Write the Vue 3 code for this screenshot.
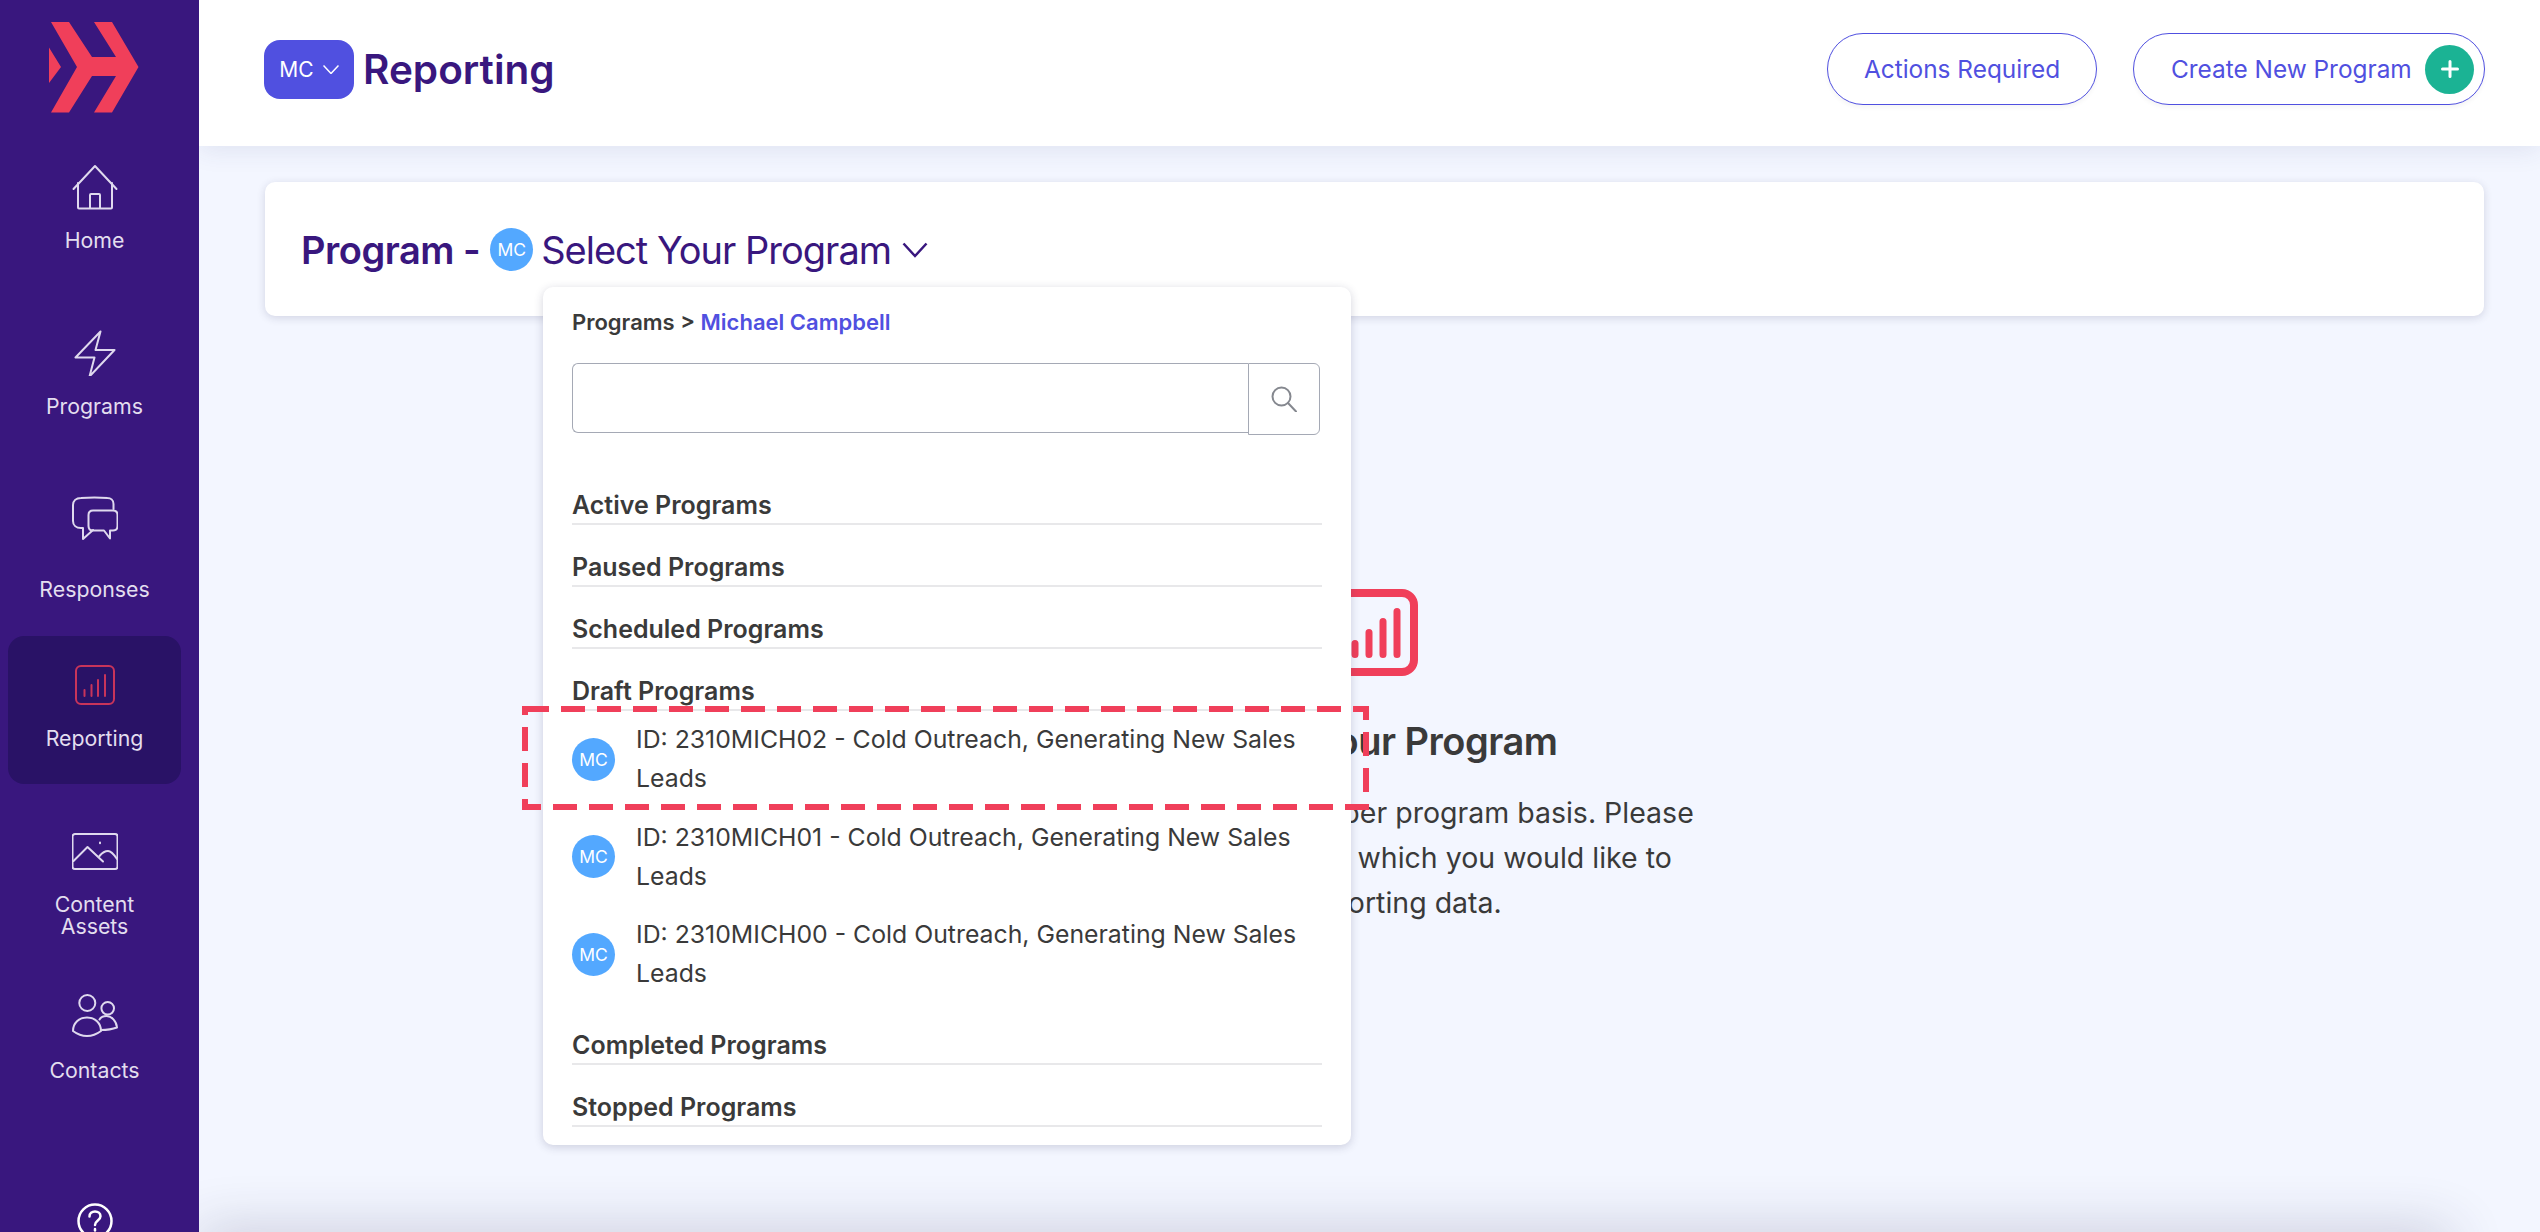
<template>
  <div class="app">
    <aside class="sidebar">
      <svg class="logo" viewBox="0 0 92 92" width="92" height="92">
        <path fill="#f03f5a" d="M1 25.500 13 45 1 61zM3 0h18l23 35h24L46 0h18l26.500 45L64 90.500H46L68 54H44L21 90.500H3L29 45z" />
      </svg>
      <nav class="nav">
        <a v-for="item in navItems" :key="item.label" class="nav-item" :class="{ active: item.active, tall: item.tall }">
          <svg class="nav-icon" viewBox="0 0 46 46" width="46" height="46">
            <path v-for="d in item.paths" :key="d" :d="d" />
          </svg>
          <span class="nav-label">{{ item.label }}</span>
        </a>
      </nav>
      <svg class="help" viewBox="0 0 36 36" width="36" height="36">
        <circle cx="18" cy="18" r="16.500" />
        <path d="M12.500 13.500c0-3.200 2.500-5 5.500-5s5.500 1.900 5.500 4.700c0 4.200-5.500 4.400-5.500 8.800" />
        <path d="M18 26v1.500" />
      </svg>
    </aside>

    <main class="main">
      <header class="topbar">
        <div class="title-wrap">
          <button class="badge">
            MC
            <svg viewBox="0 0 16 9" width="16" height="9"><path d="M.5.500 8 8.500 15.500.500" /></svg>
          </button>
          <h1 class="page-title">Reporting</h1>
        </div>
        <div class="actions">
          <button class="pill">Actions Required</button>
          <button class="pill pill-create">
            Create New Program
            <span class="plus">
              <svg viewBox="0 0 18 18" width="18" height="18"><path d="M9 1.500v15M1.500 9h15" /></svg>
            </span>
          </button>
        </div>
      </header>

      <section class="content">
        <div class="program-card">
          <strong class="program-label">Program -</strong>
          <span class="avatar">MC</span>
          <span class="program-select">Select Your Program</span>
          <svg class="select-chevron" viewBox="0 0 26 16" width="26" height="16"><path d="M1.500 1.500 13 14 24.500 1.500" /></svg>
        </div>

        <div class="empty">
          <svg class="empty-icon" viewBox="0 0 87 87" width="87" height="87">
            <rect x="4" y="4" width="79" height="79" rx="12" />
            <path class="empty-bars" d="M24 65.500V54.500M38 65.500V43.500M52 65.500V32.500M66 65.500V22.500" />
          </svg>
          <h2>Select Your Program</h2>
          <p>Reporting is run on a per program basis. Please<br />select a program for which you would like to<br />see reporting data.</p>
        </div>
      </section>

      <div class="picker">
        <div class="crumbs">Programs &gt; <span>Michael Campbell</span></div>
        <div class="search">
          <input class="search-input" type="text" />
          <button class="search-btn">
            <svg viewBox="0 0 26 26" width="26" height="26">
              <circle cx="10.500" cy="10.500" r="9" />
              <path d="m17 17 8 8.500" />
            </svg>
          </button>
        </div>
        <template v-for="group in groups" :key="group.title">
          <div class="group-title">{{ group.title }}</div>
          <div v-for="p in group.programs" :key="p" class="program-row">
            <span class="avatar">MC</span>
            <span class="program-name">{{ p }}</span>
          </div>
        </template>
      </div>

      <div class="footer-edge"></div>
    </main>

    <svg class="callout" viewBox="0 0 847 104" width="847" height="104">
      <rect x="3" y="3" width="841" height="98" />
    </svg>
  </div>
</template>

<script setup>
const navItems = [
  {
    label: 'Home',
    paths: [
      'M1.500 25 23 2l21.500 23',
      'M6 19v24.500a1 1 0 0 0 1 1h32a1 1 0 0 0 1-1V19',
      'M18 44V31a1 1 0 0 1 1-1h8a1 1 0 0 1 1 1v13'
    ]
  },
  { label: 'Programs', paths: ['M28.500 1.500 3.500 27.500h19L17.500 46.500l25-26.500h-19z'] },
  {
    label: 'Responses',
    tall: true,
    paths: [
      'M41.500 13V8c0-4-3-6-6-6C27 1.500 18 1.500 9 2 4 2 1 5 1 9v16c0 4 3 7 8 7h2v11l10-9',
      'M21 14.500h20c3 0 4.500 2 4.500 4.500v11c0 3-2 4.500-4.500 4.500h-3v8l-6-8H21c-3 0-4.500-2-4.500-4.500V19c0-2.500 1.500-4.500 4.500-4.500z'
    ]
  },
  {
    label: 'Reporting',
    active: true,
    paths: [
      'M9 4h28a5 5 0 0 1 5 5v28a5 5 0 0 1-5 5H9a5 5 0 0 1-5-5V9a5 5 0 0 1 5-5z',
      'M12.500 34v-6M19.500 34V23M26 34V18M33 34V13'
    ]
  },
  {
    label: 'Content Assets',
    paths: [
      'M3 6h40a2.500 2.500 0 0 1 2.500 2.500v30A2.500 2.500 0 0 1 43 41H3a2.500 2.500 0 0 1-2.500-2.500v-30A2.500 2.500 0 0 1 3 6z',
      'M1.500 33 15.500 19l15.500 14.500',
      'M27.500 28c2.500-3 5.500-5 8.500-5 3 0 5 2 9 8',
      'M28 14.500v.8'
    ]
  },
  {
    label: 'Contacts',
    paths: [
      'M15.300 1a8 8 0 1 1 0 16 8 8 0 0 1 0-16z',
      'M35.700 8a6.300 6.300 0 1 1 0 12.600 6.300 6.300 0 0 1 0-12.600z',
      'M1 37c0-8 6-13.500 14-13.500S29 29 29 37c-4 3-9 5-14 5S5 40 1 37z',
      'M27.500 25.500c1-2 4-3.500 7-3.500 5 0 10 5 10.500 11.500-4 1.500-10 2.500-16 2.500'
    ]
  }
]

const rowText = code => `ID: ${code} - Cold Outreach, Generating New Sales Leads`

const groups = [
  { title: 'Active Programs', programs: [] },
  { title: 'Paused Programs', programs: [] },
  { title: 'Scheduled Programs', programs: [] },
  { title: 'Draft Programs', programs: [rowText('2310MICH02'), rowText('2310MICH01'), rowText('2310MICH00')] },
  { title: 'Completed Programs', programs: [] },
  { title: 'Stopped Programs', programs: [] }
]
</script>

<style>
html,
body {
  margin: 0;
  height: 100%;
  overflow: hidden;
}
</style>

<style scoped>
.app {
  display: flex;
  position: relative;
  width: 2540px;
  height: 1232px;
  overflow: hidden;
  font-family: Inter, 'Liberation Sans', sans-serif;
  color: #3a3a3a;
}
.sidebar {
  display: flex;
  flex-direction: column;
  flex: none;
  width: 199px;
  height: 1232px;
  background: #39177e;
}
.logo {
  display: block;
  flex: none;
  margin: 22px 0 0 48px;
}
.nav {
  display: flex;
  flex-direction: column;
  gap: 18px;
  margin-top: 24px;
}
.nav-item {
  display: flex;
  flex-direction: column;
  align-items: center;
  box-sizing: border-box;
  width: 173px;
  height: 148px;
  margin-left: 8px;
  padding-top: 26px;
  border-radius: 16px;
}
.nav-item.active {
  background: #291266;
}
.nav-icon {
  flex: none;
  fill: none;
  stroke: #dfd9ee;
  stroke-width: 2;
  stroke-linejoin: round;
  stroke-linecap: round;
}
.active .nav-icon {
  stroke: #c9345a;
}
.nav-label {
  width: 116px;
  margin-top: 18.500px;
  font-size: 21.300px;
  line-height: 22px;
  text-align: center;
  color: #e3deef;
}
.tall .nav-label {
  margin-top: 36px;
}
.help {
  flex: none;
  margin: 87px 0 0 77px;
  fill: none;
  stroke: #fff;
  stroke-width: 2.500;
  stroke-linecap: round;
}
.main {
  flex: 1;
  position: relative;
  background: #f3f6ff;
  overflow: hidden;
}
.topbar {
  display: flex;
  align-items: center;
  justify-content: space-between;
  box-sizing: border-box;
  position: relative;
  z-index: 1;
  height: 146px;
  padding: 0 55px 8px 65px;
  background: #fff;
  box-shadow: 0 4px 24px rgba(50, 60, 120, 0.1);
}
.title-wrap {
  display: flex;
  align-items: center;
  gap: 9px;
}
.badge {
  display: flex;
  align-items: center;
  justify-content: center;
  gap: 9px;
  width: 90px;
  height: 59px;
  padding: 0;
  border: 0;
  border-radius: 16px;
  background: #5050e0;
  color: #fff;
  font: 400 21px Inter, sans-serif;
}
.badge svg {
  fill: none;
  stroke: #fff;
  stroke-width: 1.500;
}
.page-title {
  margin: 0;
  font-size: 40.500px;
  font-weight: 600;
  color: #39177e;
}
.actions {
  display: flex;
  gap: 36px;
}
.pill {
  display: flex;
  align-items: center;
  justify-content: center;
  box-sizing: border-box;
  width: 270px;
  height: 72px;
  padding: 0;
  border: 1.500px solid #5050e0;
  border-radius: 36px;
  background: #fff;
  box-shadow: 0 3px 4px rgba(0, 0, 0, 0.04);
  color: #5050e0;
  font: 400 24.400px Inter, sans-serif;
}
.pill-create {
  justify-content: flex-start;
  width: 352px;
  padding: 0 10px 0 37px;
}
.plus {
  display: flex;
  align-items: center;
  justify-content: center;
  width: 49px;
  height: 49px;
  margin-left: auto;
  border-radius: 50%;
  background: #1bb394;
}
.plus svg {
  fill: none;
  stroke: #fff;
  stroke-width: 3;
  stroke-linecap: round;
}
.content {
  display: flex;
  flex-direction: column;
  padding: 36px 56px 0 66px;
}
.program-card {
  display: flex;
  align-items: center;
  box-sizing: border-box;
  height: 134px;
  padding: 2px 0 0 36px;
  border-radius: 10px;
  background: #fff;
  box-shadow: 0 2px 8px rgba(40, 40, 80, 0.16);
}
.program-label {
  font-size: 38px;
  font-weight: 600;
  letter-spacing: -0.500px;
  color: #39177e;
}
.program-card .avatar {
  margin: -2px 8px 0 10px;
}
.program-select {
  font-size: 38px;
  letter-spacing: -1px;
  color: #39177e;
}
.select-chevron {
  margin-left: 11px;
  fill: none;
  stroke: #39177e;
  stroke-width: 2.500;
}
.avatar {
  display: flex;
  align-items: center;
  justify-content: center;
  flex: none;
  width: 43px;
  height: 43px;
  border-radius: 50%;
  background: #53a8ff;
  color: #fff;
  font-size: 17.500px;
}
.empty {
  display: flex;
  flex-direction: column;
  align-items: center;
  margin-top: 273px;
}
.empty-icon {
  fill: none;
  stroke: #f03f5a;
  stroke-width: 8;
  stroke-linecap: round;
}
.empty-bars {
  stroke-width: 7;
}
.empty h2 {
  margin: 40px 0 0;
  font-size: 38px;
  line-height: 50px;
  font-weight: 600;
  letter-spacing: -0.500px;
}
.empty p {
  margin: 24px 0 0;
  font-size: 28.500px;
  line-height: 45px;
  text-align: center;
}
.picker {
  position: absolute;
  z-index: 2;
  left: 344px;
  top: 287px;
  box-sizing: border-box;
  width: 808px;
  height: 858px;
  padding: 24px 29px 0;
  border-radius: 10px;
  background: #fff;
  box-shadow: 0 2px 10px rgba(40, 40, 80, 0.2);
}
.crumbs {
  font-size: 22px;
  line-height: 22px;
  font-weight: 600;
}
.crumbs span {
  color: #5050e0;
}
.search {
  display: flex;
  width: 748px;
  height: 72px;
  margin: 30px 0 27.500px;
}
.search-input {
  box-sizing: border-box;
  flex: 1;
  height: 70px;
  border: 1px solid #a5a9b5;
  border-right: 0;
  border-radius: 6px 0 0 6px;
  background: #fff;
}
.search-btn {
  display: flex;
  align-items: center;
  justify-content: center;
  box-sizing: border-box;
  width: 72px;
  height: 72px;
  padding: 0;
  border: 1px solid #a5a9b5;
  border-radius: 0 6px 6px 0;
  background: #fff;
}
.search-btn svg {
  fill: none;
  stroke: #85888f;
  stroke-width: 2;
  stroke-linecap: round;
}
.group-title {
  display: flex;
  align-items: flex-end;
  box-sizing: border-box;
  height: 62px;
  padding-bottom: 3px;
  border-bottom: 2px solid #e8e8ea;
  font-size: 25px;
  line-height: 30px;
  font-weight: 600;
}
.program-row {
  display: flex;
  align-items: center;
  gap: 21px;
  box-sizing: border-box;
  height: 97.500px;
}
.program-name {
  font-size: 24.800px;
  line-height: 39px;
}
.footer-edge {
  position: absolute;
  left: 0;
  right: 90px;
  top: 1232px;
  height: 40px;
  box-shadow: 0 0 56px rgba(40, 40, 80, 0.24);
}
.callout {
  position: absolute;
  z-index: 3;
  left: 522px;
  top: 706px;
  fill: none;
  stroke: #f03f5a;
  stroke-width: 6;
  stroke-dasharray: 24 12;
}
</style>
